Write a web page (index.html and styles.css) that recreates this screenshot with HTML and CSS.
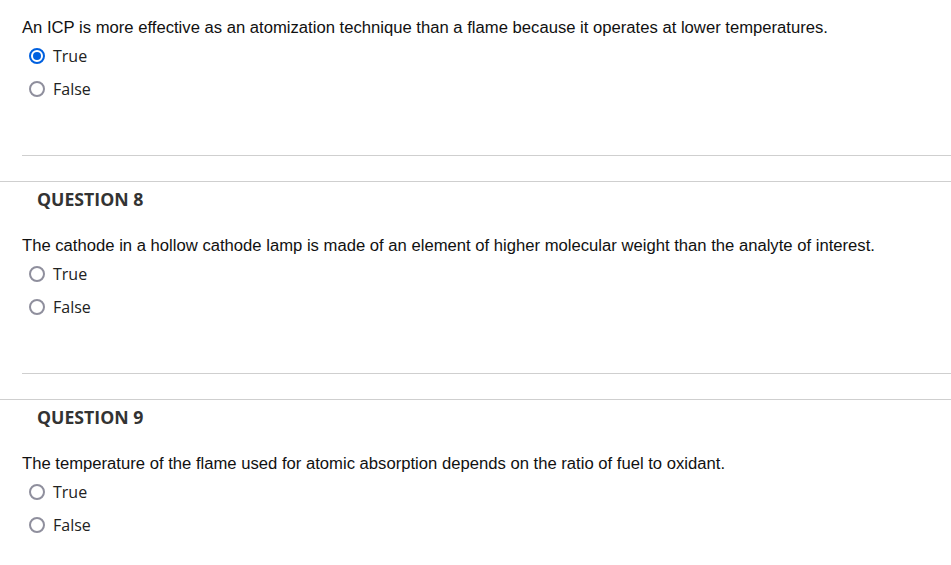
FILE: index.html
```html
<!DOCTYPE html>
<html>
<head>
<meta charset="utf-8">
<link rel="stylesheet" href="styles.css">
</head>
<body>
<div class="page">
  <section class="question first">
    <div class="prompt">An ICP is more effective as an atomization technique than a flame because it operates at lower temperatures.</div>
    <ul class="options">
      <li class="option"><span class="radio checked"></span><span class="label">True</span></li>
      <li class="option"><span class="radio"></span><span class="label">False</span></li>
    </ul>
    <hr class="inner-rule">
  </section>
  <section class="question">
    <h3 class="qtitle">QUESTION 8</h3>
    <div class="prompt">The cathode in a hollow cathode lamp is made of an element of higher molecular weight than the analyte of interest.</div>
    <ul class="options">
      <li class="option"><span class="radio"></span><span class="label">True</span></li>
      <li class="option"><span class="radio"></span><span class="label">False</span></li>
    </ul>
    <hr class="inner-rule">
  </section>
  <section class="question">
    <h3 class="qtitle">QUESTION 9</h3>
    <div class="prompt">The temperature of the flame used for atomic absorption depends on the ratio of fuel to oxidant.</div>
    <ul class="options">
      <li class="option"><span class="radio"></span><span class="label">True</span></li>
      <li class="option"><span class="radio"></span><span class="label">False</span></li>
    </ul>
  </section>
</div>
</body>
</html>
```

FILE: styles.css
```css
html, body {
  margin: 0;
  padding: 0;
  background: #fff;
}
.page {
  width: 951px;
  overflow: hidden;
}
.question {
  border-top: 1px solid #cfcfcf;
  padding-top: 7px;
}
.question.first {
  border-top: none;
  padding-top: 19px;
}
.qtitle {
  margin: 0 0 28px 37px;
  font-family: "Open Sans", sans-serif;
  font-weight: 700;
  font-size: 17.7px;
  line-height: 20px;
  color: #333;
}
.prompt {
  margin-left: 22px;
  font-family: "Liberation Sans", Arial, sans-serif;
  font-size: 16.65px;
  line-height: 18px;
  color: #111;
  white-space: nowrap;
}
.options {
  list-style: none;
  margin: 2px 0 0 0;
  padding: 0;
}
.option {
  display: flex;
  align-items: center;
  height: 33px;
  padding-left: 29px;
}
.radio {
  box-sizing: border-box;
  width: 16px;
  height: 16px;
  border-radius: 50%;
  border: 2px solid #8f8f9d;
  background: #fff;
  flex: none;
}
.radio.checked {
  border-color: #0060df;
  position: relative;
}
.radio.checked::after {
  content: "";
  position: absolute;
  left: 2px;
  top: 2px;
  width: 8px;
  height: 8px;
  border-radius: 50%;
  background: #0060df;
}
.label {
  margin-left: 8px;
  font-family: "Open Sans", sans-serif;
  font-size: 16px;
  color: #222;
}
.inner-rule {
  margin: 50px 0 25px 22px;
  border: none;
  border-top: 1px solid #cfcfcf;
  height: 0;
}
```
